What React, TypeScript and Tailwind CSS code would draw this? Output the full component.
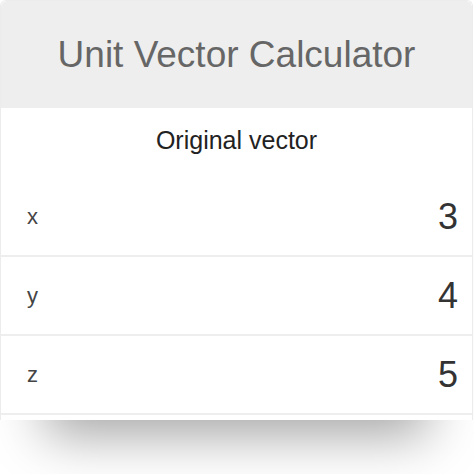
export default function App() {
  const rows = [
    { label: 'x', value: '3' },
    { label: 'y', value: '4' },
    { label: 'z', value: '5' },
  ];

  return (
    <div className="w-[474px] h-[474px] bg-white overflow-hidden" style={{ fontFamily: '"Liberation Sans", Arial, sans-serif' }}>
      <div className="w-[473px] bg-white rounded-t-[6px] border-x border-t border-[#ececec] pb-[5px] shadow-[0_60px_50px_-45px_rgba(0,0,0,0.36)]">
        {/* Header */}
        <div className="h-[107px] bg-[#eeeeee] rounded-t-[6px] flex items-center justify-center">
          <h1 className="text-[37px] leading-none text-[#666666] -mt-[1px]">Unit Vector Calculator</h1>
        </div>

        {/* Section title */}
        <div className="h-[70px] flex items-center justify-center">
          <span className="text-[25px] leading-none text-[#222222] -mt-[6px]">Original vector</span>
        </div>

        {/* Rows */}
        {rows.map(r => (
          <div key={r.label} className="h-[79px] border-b-2 border-[#eeeeee] flex items-center justify-between pl-[26px] pr-[14px]">
            <span className="text-[22px] leading-none text-[#444444]">{r.label}</span>
            <span className="text-[36px] leading-none text-[#333333]">{r.value}</span>
          </div>
        ))}
      </div>
    </div>
  );
}
